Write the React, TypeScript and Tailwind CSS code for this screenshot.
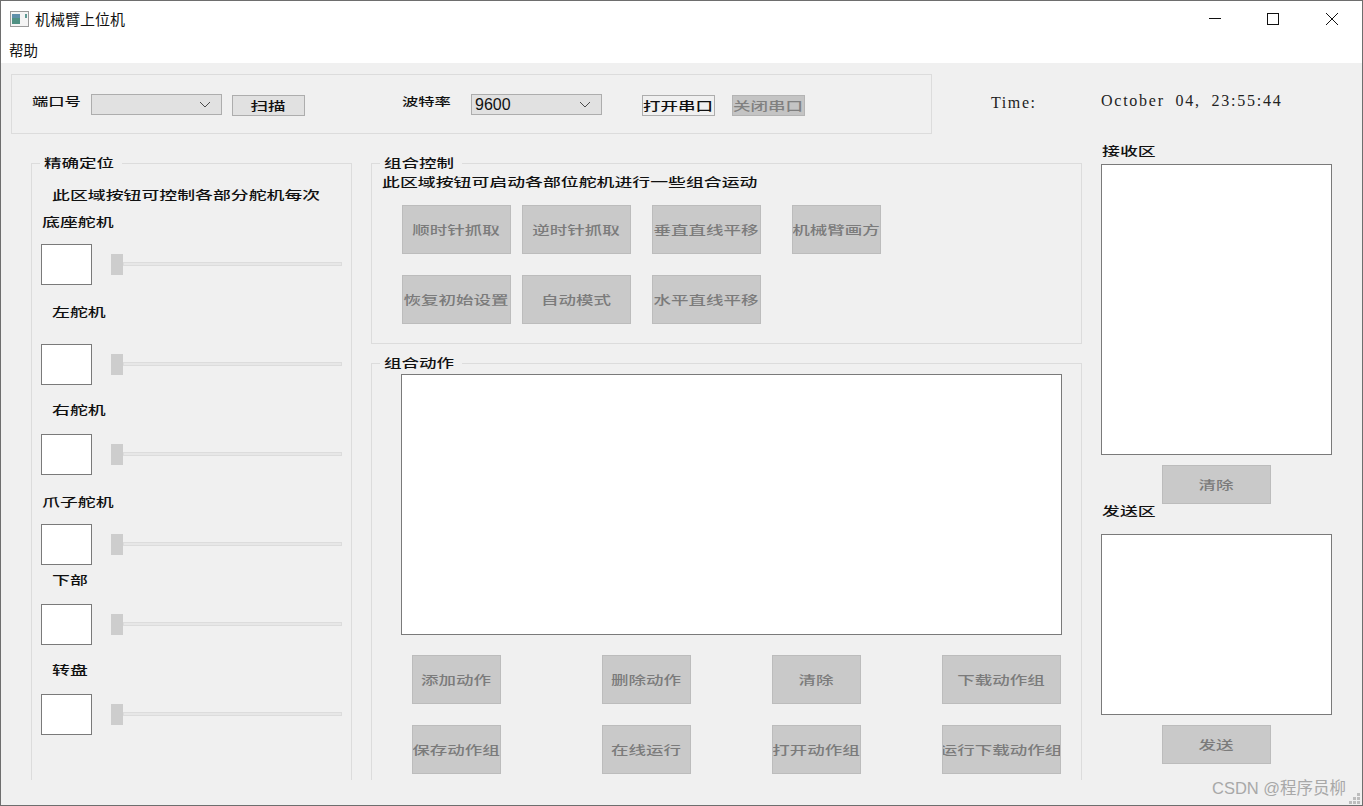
import React from "react";

const CJK = "font-['Noto_Sans_CJK_SC','Noto_Sans_CJK_JP',sans-serif]";

function Txt({ children, className = "" }: { children: React.ReactNode; className?: string }) {
  return (
    <div className={`h-4 leading-[16px] whitespace-nowrap origin-left scale-x-[1.49] text-[12px] font-medium text-[#111] ${CJK} ${className}`}>
      {children}
    </div>
  );
}

function Legend({ children }: { children: React.ReactNode }) {
  return (
    <legend className="ml-[8px] w-[82px] h-4 pl-1 leading-[14px] whitespace-nowrap">
      <span className={`inline-block origin-left scale-x-[1.46] text-[12px] font-medium text-[#111] ${CJK}`}>{children}</span>
    </legend>
  );
}

function Btn({ children, className = "" }: { children: React.ReactNode; className?: string }) {
  return (
    <div className={`flex items-center justify-center overflow-hidden shrink-0 bg-[#c9c9c9] border border-[#bcbcbc] ${className}`}>
      <span className={`shrink-0 whitespace-nowrap scale-x-[1.46] text-[12px] font-medium text-[#7b7b7b] ${CJK}`}>{children}</span>
    </div>
  );
}

function SmallBtn({ children, off, light, className = "" }: { children: React.ReactNode; off?: boolean; light?: boolean; className?: string }) {
  const tone = off
    ? "bg-[#c4c4c4] border-[#b4b4b4] text-[#808080]"
    : light
      ? "bg-[#f0f0f0] border-[#adadad] text-[#111]"
      : "bg-[#e1e1e1] border-[#adadad] text-[#111]";
  return (
    <div className={`w-[73px] h-[21px] mt-5 flex items-center justify-center overflow-hidden shrink-0 border ${tone} ${className}`}>
      <span className={`whitespace-nowrap scale-x-[1.46] text-[12px] font-medium ${CJK}`}>{children}</span>
    </div>
  );
}

function Chevron() {
  return (
    <svg width="12" height="7" viewBox="0 0 12 7" fill="none" stroke="#4a4a4a" strokeWidth="1">
      <path d="M1 1l5 5 5-5" />
    </svg>
  );
}

function Combo({ value }: { value?: string }) {
  return (
    <div className="w-[131px] h-[21px] mt-[19px] shrink-0 flex items-center justify-between pl-[3px] pr-[10px] bg-[#e1e1e1] border border-[#adadad] text-[16px] leading-none text-[#111] font-['Liberation_Sans',sans-serif]">
      <span>{value}</span>
      <Chevron />
    </div>
  );
}

function Servo({ label, labelClass, boxClass, rowClass }: { label: string; labelClass: string; boxClass: string; rowClass: string }) {
  return (
    <div className={rowClass}>
      <Txt className={labelClass}>{label}</Txt>
      <div className={`flex items-center ml-[9px] ${boxClass}`}>
        <div className="w-[51px] h-[41px] bg-white border border-[#7a7a7a]" />
        <div className="w-3 h-[21px] ml-[19px] bg-[#cdcdcd]" />
        <div className="w-[219px] h-1 -mt-px bg-[#e7e7e7] border border-[#dcdcdc]" />
      </div>
    </div>
  );
}

export default function App() {
  return (
    <div className="relative w-[1363px] h-[806px] flex flex-col overflow-hidden border border-[#6e6e6e] bg-white">
      {/* title bar */}
      <div className="h-[37px] shrink-0 flex items-center bg-white">
        <svg className="ml-[9px] -mt-px" width="19" height="16" viewBox="0 0 19 16">
          <rect x="0.5" y="0.5" width="18" height="15" fill="#f4f4f4" stroke="#9a9a9a" />
          <rect x="2" y="3" width="8" height="10" fill="#4f9183" />
          <rect x="2" y="3" width="8" height="4" fill="#5e8faa" />
          <rect x="15" y="3" width="2" height="4" fill="#5e9a94" />
        </svg>
        <span className={`ml-[6px] -mt-px text-[15px] text-[#111] ${CJK}`}>机械臂上位机</span>
        <div className="ml-auto flex items-center -mt-px">
          <svg width="12" height="12" viewBox="0 0 12 12" stroke="#111" fill="none" className="mr-[46px]"><path d="M0 5.5h12" /></svg>
          <svg width="12" height="12" viewBox="0 0 12 12" stroke="#111" fill="none" className="mr-[47px]"><rect x="0.5" y="0.5" width="11" height="11" /></svg>
          <svg width="12" height="12" viewBox="0 0 12 12" stroke="#111" fill="none" className="mr-6"><path d="M0 0l12 12M12 0L0 12" /></svg>
        </div>
      </div>
      {/* menu */}
      <div className={`h-[25px] shrink-0 pl-2 pt-[2px] leading-5 text-[14.5px] text-[#111] bg-white ${CJK}`}>帮助</div>

      {/* body */}
      <div className="flex-1 bg-[#f0f0f0] overflow-hidden">
        {/* top row */}
        <div className="flex items-start mt-[11px] ml-[10px]">
          <div className="w-[921px] h-[60px] flex items-start border border-[#dcdcdc]">
            <div className="w-[79px] pl-5 mt-[19px] shrink-0">
              <div className={`h-4 leading-[14px] whitespace-nowrap origin-left scale-x-[1.48] text-[11px] font-medium text-[#111] ${CJK}`}>端口号</div>
            </div>
            <Combo />
            <SmallBtn className="ml-[10px]">扫描</SmallBtn>
            <div className="w-[69px] ml-[97px] mt-[19px] shrink-0">
              <div className={`h-4 leading-[14px] whitespace-nowrap origin-left scale-x-[1.48] text-[11px] font-medium text-[#111] ${CJK}`}>波特率</div>
            </div>
            <Combo value="9600" />
            <SmallBtn light className="ml-10">打开串口</SmallBtn>
            <SmallBtn off className="ml-[17px]">关闭串口</SmallBtn>
          </div>
          <div className="ml-[59px] w-[110px] mt-[19px] shrink-0 text-[16px] tracking-[1.6px] leading-5 text-[#222] font-['Liberation_Serif',serif]">Time:</div>
          <div className="mt-[17px] text-[16px] tracking-[1.75px] [word-spacing:5px] leading-5 text-[#222] whitespace-nowrap font-['Liberation_Serif',serif]">October 04, 23:55:44</div>
        </div>

        {/* columns */}
        <div className="flex items-start pl-[30px]">
          {/* left */}
          <fieldset className="w-[321px] h-[625px] mt-[21px] shrink-0 border border-b-0 border-[#dcdcdc]">
            <Legend>精确定位</Legend>
            <Txt className="mt-4 ml-5">此区域按钮可控制各部分舵机每次</Txt>
            <Servo rowClass="mt-[11px]" label="底座舵机" labelClass="ml-[10px]" boxClass="mt-[14px]" />
            <Servo rowClass="mt-[19px]" label="左舵机" labelClass="ml-5" boxClass="mt-6" />
            <Servo rowClass="mt-[17px]" label="右舵机" labelClass="ml-5" boxClass="mt-4" />
            <Servo rowClass="mt-[19px]" label="爪子舵机" labelClass="ml-[10px]" boxClass="mt-[14px]" />
            <Servo rowClass="mt-[7px]" label="下部" labelClass="ml-5" boxClass="mt-4" />
            <Servo rowClass="mt-[17px]" label="转盘" labelClass="ml-5" boxClass="mt-4" />
          </fieldset>

          {/* center */}
          <div className="ml-[19px] w-[711px] mt-[21px] shrink-0 flex flex-col">
            <fieldset className="h-[189px] border border-[#dcdcdc]">
              <Legend>组合控制</Legend>
              <Txt className="mt-[3px] ml-[10px]">此区域按钮可启动各部位舵机进行一些组合运动</Txt>
              <div className="flex mt-[15px] ml-[30px]">
                <Btn className="w-[109px] h-[49px]">顺时针抓取</Btn>
                <Btn className="w-[109px] h-[49px] ml-[11px]">逆时针抓取</Btn>
                <Btn className="w-[109px] h-[49px] ml-[21px]">垂直直线平移</Btn>
                <Btn className="w-[89px] h-[49px] ml-[31px]">机械臂画方</Btn>
              </div>
              <div className="flex mt-[21px] ml-[30px]">
                <Btn className="w-[109px] h-[49px]">恢复初始设置</Btn>
                <Btn className="w-[109px] h-[49px] ml-[11px]">自动模式</Btn>
                <Btn className="w-[109px] h-[49px] ml-[21px]">水平直线平移</Btn>
              </div>
            </fieldset>
            <fieldset className="h-[425px] mt-[11px] border border-b-0 border-[#dcdcdc]">
              <Legend>组合动作</Legend>
              <div className="w-[661px] h-[261px] mt-[3px] ml-[29px] bg-white border border-[#7a7a7a]" />
              <div className="flex mt-5 ml-10">
                <Btn className="w-[89px] h-[49px]">添加动作</Btn>
                <Btn className="w-[89px] h-[49px] ml-[101px]">删除动作</Btn>
                <Btn className="w-[89px] h-[49px] ml-[81px]">清除</Btn>
                <Btn className="w-[119px] h-[49px] ml-[81px]">下载动作组</Btn>
              </div>
              <div className="flex mt-[21px] ml-10">
                <Btn className="w-[89px] h-[49px]">保存动作组</Btn>
                <Btn className="w-[89px] h-[49px] ml-[101px]">在线运行</Btn>
                <Btn className="w-[89px] h-[49px] ml-[81px]">打开动作组</Btn>
                <Btn className="w-[119px] h-[49px] ml-[81px]">运行下载动作组</Btn>
              </div>
            </fieldset>
          </div>

          {/* right */}
          <div className="ml-[19px] w-[231px] mt-[9px] shrink-0">
            <Txt className="ml-[1px]">接收区</Txt>
            <div className="h-[291px] mt-[5px] bg-white border border-[#7a7a7a]" />
            <Btn className="w-[109px] h-[39px] mt-[10px] ml-[61px]">清除</Btn>
            <Txt className="-mt-[1px] ml-[1px]">发送区</Txt>
            <div className="h-[181px] mt-[15px] bg-white border border-[#7a7a7a]" />
            <Btn className="w-[109px] h-[39px] mt-[10px] ml-[61px]">发送</Btn>
          </div>
        </div>
      </div>

      {/* watermark */}
      <div className="absolute left-[1211px] top-[776px] text-[16.5px] leading-[22px] text-[#a8a8a8] whitespace-nowrap font-['Liberation_Sans','Noto_Sans_CJK_SC',sans-serif]">CSDN @程序员柳</div>
      {/* size grip */}
      <svg className="absolute right-[2px] bottom-[1px]" width="11" height="11" viewBox="0 0 11 11" fill="#bdbdbd">
        <rect x="8" y="0" width="3" height="3" />
        <rect x="4" y="4" width="3" height="3" />
        <rect x="8" y="4" width="3" height="3" />
        <rect x="0" y="8" width="3" height="3" />
        <rect x="4" y="8" width="3" height="3" />
        <rect x="8" y="8" width="3" height="3" />
      </svg>
    </div>
  );
}
